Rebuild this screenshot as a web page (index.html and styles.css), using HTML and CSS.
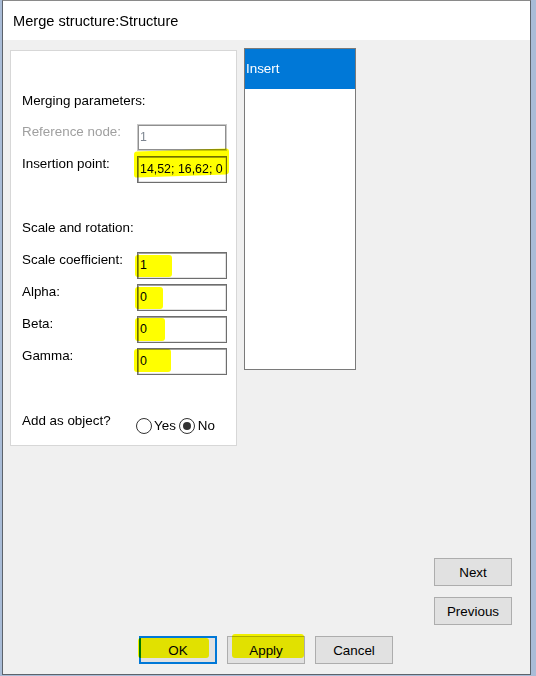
FILE: index.html
```html
<!DOCTYPE html>
<html lang="en">
<head>
  <meta charset="UTF-8">
  <title>Merge structure:Structure</title>
  <link rel="stylesheet" href="styles.css">
</head>
<body>

<div class="window">
  <div class="titlebar">Merge structure:Structure</div>

  <div class="client">
    <div class="top">
      <!-- parameters -->
      <div class="panel">
        <div class="heading">Merging parameters:</div>
        <div class="fields first">
          <div class="label disabled">Reference node:</div>
          <div class="field readonly"><span>1</span></div>
          <div class="label">Insertion point:</div>
          <div class="field"><span>14,52; 16,62; 0</span><i class="mark mark-ins"></i></div>
        </div>

        <div class="heading second">Scale and rotation:</div>
        <div class="fields">
          <div class="label">Scale coefficient:</div>
          <div class="field"><span>1</span><i class="mark mark-scale"></i></div>
          <div class="label">Alpha:</div>
          <div class="field"><span>0</span><i class="mark mark-alpha"></i></div>
          <div class="label">Beta:</div>
          <div class="field"><span>0</span><i class="mark mark-beta"></i></div>
          <div class="label">Gamma:</div>
          <div class="field"><span>0</span><i class="mark mark-gamma"></i></div>
        </div>

        <div class="option">
          <div class="label">Add as object?</div>
          <div class="radios">
            <span class="circle"></span><span class="radio-text">Yes</span>
            <span class="circle checked"></span><span class="radio-text no">No</span>
          </div>
        </div>
      </div>

      <!-- steps -->
      <div class="listbox">
        <div class="item">Insert</div>
      </div>
    </div>

    <div class="nav">
      <button class="btn">Next</button>
      <button class="btn">Previous</button>
    </div>

    <div class="actions">
      <button class="btn default">OK<i class="mark mark-ok"></i></button>
      <button class="btn">Apply<i class="mark mark-apply"></i></button>
      <button class="btn">Cancel</button>
    </div>
  </div>
</div>

</body>
</html>
```

FILE: styles.css
```css
* { box-sizing: border-box; margin: 0; padding: 0; }

body {
  font-family: "Liberation Sans", Arial, sans-serif;
  font-size: 13.4px;
  color: #000;
  background: #a9bcd7;
}

.window {
  margin-left: 2px;
  width: 529px;
  height: 675px;
  border: 1px solid #5d636b;
  border-top-color: #8a8a8a;
  background: #f0f0f0;
  display: flex;
  flex-direction: column;
}

.titlebar {
  height: 39px;
  background: #fff;
  padding-left: 10px;
  display: flex;
  align-items: center;
  font-size: 14.6px;
}

.client {
  flex: 1;
  display: flex;
  flex-direction: column;
  padding: 8px 18px 10px 7px;
}

.top {
  display: flex;
  align-items: flex-start;
}

/* Panel de parametros */
.panel {
  width: 227px;
  height: 396px;
  margin-top: 2px;
  margin-right: 7px;
  background: #fff;
  border: 1px solid #d7d7d7;
  padding: 42px 0 0 11px;
}

.heading,
.label {
  line-height: 16px;
}

.heading.second {
  margin-top: 37px;
}

.fields {
  display: grid;
  grid-template-columns: 115px 90px;
  grid-auto-rows: 27px;
  row-gap: 5px;
  margin-top: 16px;
}

.fields.first {
  margin-top: 15px;
}

.label.disabled {
  color: #a0a0a0;
}

.field {
  position: relative;
  height: 27px;
  border: 1px solid #6e6e6e;
  box-shadow: inset 1px 1px 0 #a0a0a0, inset -1px -1px 0 #e3e3e3;
  background: #fff;
  display: flex;
  align-items: center;
  padding: 0 0 1px 2px;
  font-size: 12.4px;
  white-space: nowrap;
  overflow: visible;
}

.field.readonly {
  border-color: #c8c8c8;
  box-shadow: inset 0 0 0 1px #8f8f8f;
  color: #7d8590;
}

/* marcas amarillas */
.mark {
  position: absolute;
  background: #ffff00;
  mix-blend-mode: multiply;
  border-radius: 3px;
}

.mark-ins { left: -4px; top: -7px; width: 95px; height: 26px; transform: skewY(-2deg); }
.mark-scale { left: -3px; top: 2px; width: 37px; height: 22px; }
.mark-alpha { left: -3px; top: 2px; width: 28px; height: 22px; }
.mark-beta { left: -3px; top: 1px; width: 30px; height: 23px; }
.mark-gamma { left: -4px; top: 0; width: 37px; height: 23px; }
.mark-ok { left: -3px; top: 0; width: 71px; height: 20px; }
.mark-apply { left: 4px; top: -3px; width: 72px; height: 24px; }

.option {
  display: grid;
  grid-template-columns: 115px 90px;
  margin-top: 38px;
}

.radios {
  display: flex;
  align-items: center;
  margin-left: -1px;
  margin-top: 5px;
  line-height: 16px;
}

.circle {
  width: 16px;
  height: 16px;
  border: 1px solid #333;
  border-radius: 50%;
  background: #fff;
  display: flex;
  align-items: center;
  justify-content: center;
  margin-left: 3px;
}

.circle:first-child {
  margin-left: 0;
}

.circle.checked::after {
  content: "";
  width: 8px;
  height: 8px;
  border-radius: 50%;
  background: #333;
}

.radio-text {
  margin-left: 2px;
}

.radio-text.no {
  margin-left: 3px;
}

/* Lista de pasos */
.listbox {
  width: 112px;
  height: 322px;
  border: 1px solid #7a7a7a;
  background: #fff;
}

.item {
  height: 40px;
  line-height: 40px;
  padding-left: 1px;
  background: #0078d7;
  color: #fff;
}

/* Botones */
.btn {
  position: relative;
  width: 78px;
  height: 28px;
  font: inherit;
  color: #000;
  background: #e1e1e1;
  border: 1px solid #adadad;
  overflow: visible;
}

.btn.default {
  border: 2px solid #0078d7;
}

.nav {
  margin-top: auto;
  display: flex;
  flex-direction: column;
  align-items: flex-end;
  gap: 11px;
}

.actions {
  display: flex;
  gap: 10px;
  margin-top: 11px;
  margin-left: 129px;
}
```
